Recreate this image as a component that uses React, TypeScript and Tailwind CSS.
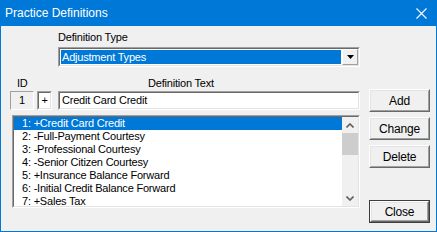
import type { ReactNode } from "react";

const items = [
	"1: +Credit Card Credit",
	"2: -Full-Payment Courtesy",
	"3: -Professional Courtesy",
	"4: -Senior Citizen Courtesy",
	"5: +Insurance Balance Forward",
	"6: -Initial Credit Balance Forward",
	"7: +Sales Tax",
];

// classic 2px sunken frame
function Sunken({ className = "", inner = "", children }: { className?: string; inner?: string; children?: ReactNode }) {
	return (
		<div className={`border border-t-[#a0a0a0] border-l-[#a0a0a0] border-b-white border-r-white ${className}`}>
			<div className={`h-full w-full border border-t-[#696969] border-l-[#696969] border-b-[#e3e3e3] border-r-[#e3e3e3] ${inner}`}>
				{children}
			</div>
		</div>
	);
}

function Button({ label, className = "", isDefault = false }: { label: string; className?: string; isDefault?: boolean }) {
	const face = (
		<div className="h-full w-full border border-t-white border-l-white border-b-[#696969] border-r-[#696969]">
			<div className="flex h-full w-full items-center justify-center border border-t-[#e3e3e3] border-l-[#e3e3e3] border-b-[#a0a0a0] border-r-[#a0a0a0] bg-[#f0f0f0] text-[12px]">
				{label}
			</div>
		</div>
	);
	return (
		<div className={`h-[23px] w-[61px] ${isDefault ? "border border-[#3c3c3c]" : ""} ${className}`}>
			{face}
		</div>
	);
}

function Chevron({ up }: { up?: boolean }) {
	return (
		<svg width="8" height="5" viewBox="0 0 8 5" fill="none">
			<path d={up ? "M0.5 4.5 L4 1 L7.5 4.5" : "M0.5 0.5 L4 4 L7.5 0.5"} stroke="#606060" strokeWidth="1.6" />
		</svg>
	);
}

export default function App() {
	return (
		<div className="flex h-[232px] w-[437px] flex-col bg-[#0078d7] px-px pb-px font-['Liberation_Sans',Arial,sans-serif] text-[11px] tracking-[-0.2px] text-black">
			{/* title bar */}
			<div className="flex h-[26px] items-center justify-between text-white">
				<span className="pl-[4px] text-[12px] tracking-normal">Practice Definitions</span>
				<svg className="mr-[9px]" width="11" height="11" viewBox="0 0 11 11">
					<path d="M0.5 0.5 L10.5 10.5 M10.5 0.5 L0.5 10.5" stroke="white" strokeWidth="1.1" />
				</svg>
			</div>

			<div className="flex flex-1 bg-[#f0f0f0] pl-[9px]">
				{/* left column */}
				<div className="flex w-[350px] flex-col">
					<div className="ml-[48px] mt-[5px] h-[13px] leading-[13px]">Definition Type</div>

					<Sunken className="ml-[48px] mt-[3px] h-[20px] w-[302px]" inner="flex bg-white">
						<div className="flex-1 p-px">
							<div className="flex h-full items-center bg-[#0078d7] pl-[1px] text-white">Adjustment Types</div>
						</div>
						<div className="h-full w-[16px] border border-t-white border-l-white border-b-[#a0a0a0] border-r-[#a0a0a0] bg-[#f0f0f0]">
							<div className="flex h-full items-center justify-center">
								<svg width="7" height="4" viewBox="0 0 7 4">
									<path d="M0 0 H7 L3.5 4 Z" fill="black" />
								</svg>
							</div>
						</div>
					</Sunken>

					<div className="mt-[10px] flex h-[13px] leading-[13px]">
						<div className="w-[48px] pl-[7px]">ID</div>
						<div className="pl-[90px]">Definition Text</div>
					</div>

					<div className="mt-[1px] flex h-[19px]">
						<div className="flex h-full w-[24px] items-center justify-center border border-t-[#a0a0a0] border-l-[#a0a0a0] border-b-white border-r-white">
							1
						</div>
						<Sunken className="ml-[3px] h-full w-[15px]" inner="flex items-center justify-center bg-white">
							+
						</Sunken>
						<Sunken className="ml-[6px] h-full w-[302px]" inner="flex items-center bg-white pl-[2px]">
							Credit Card Credit
						</Sunken>
					</div>

					<Sunken className="ml-[2px] mt-[5px] h-[93px] w-[348px]" inner="flex bg-white">
						<div className="flex flex-1 flex-col">
							{items.map((item, i) => (
								<div
									key={item}
									className={`h-[13px] pl-[8px] leading-[13px] ${i === 0 ? "bg-[#0078d7] text-white" : ""}`}
								>
									{item}
								</div>
							))}
						</div>
						<div className="flex w-[16px] flex-col bg-[#f0f0f0]">
							<div className="flex h-[16px] items-center justify-center">
								<Chevron up />
							</div>
							<div className="h-[22px] bg-[#cdcdcd]" />
							<div className="flex-1" />
							<div className="flex h-[16px] items-center justify-center">
								<Chevron />
							</div>
						</div>
					</Sunken>
				</div>

				{/* right column */}
				<div className="ml-[9px] flex flex-col">
					<Button label="Add" className="mt-[63px]" />
					<Button label="Change" className="mt-[5px]" />
					<Button label="Delete" className="mt-[5px]" />
					<Button label="Close" className="mt-[32px]" isDefault />
				</div>
			</div>
		</div>
	);
}
